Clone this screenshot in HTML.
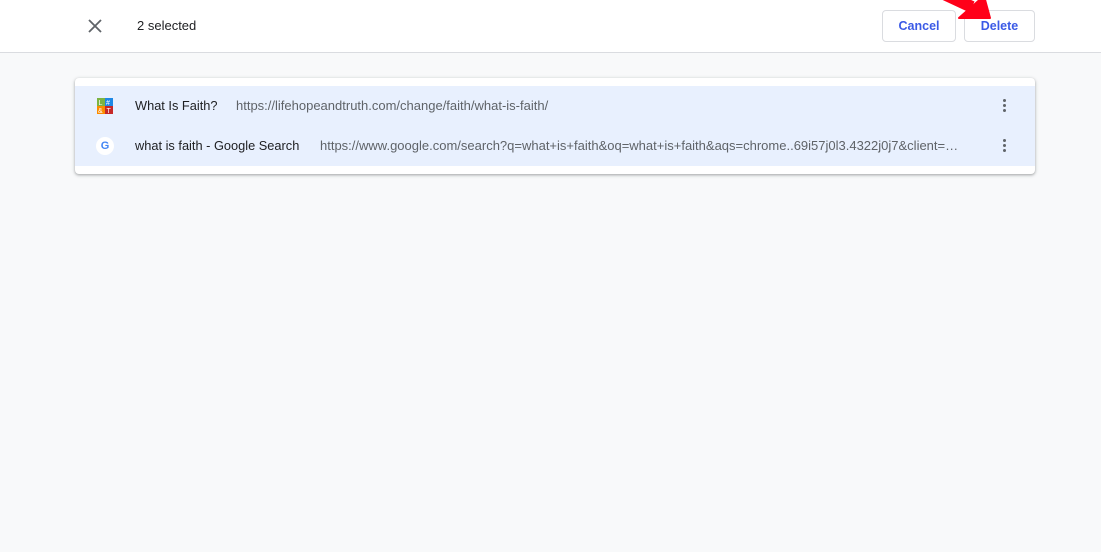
<!DOCTYPE html>
<html><head><meta charset="utf-8"><style>
*{margin:0;padding:0;box-sizing:border-box}
body{width:1101px;height:552px;background:#f8f9fa;font-family:"Liberation Sans",Roboto,sans-serif;position:relative;overflow:hidden}
.top{position:absolute;left:0;top:0;width:1101px;height:53px;background:#fff;border-bottom:1px solid #dadce0}
.x{position:absolute;left:88px;top:19px}
.sel{position:absolute;left:137px;top:18px;font-size:13px;color:#202124}
.btn{position:absolute;top:10px;height:32px;border:1px solid #dadce0;border-radius:4px;background:#fff;color:#3b5ae6;font-size:12.5px;font-weight:bold;text-align:center;line-height:30px}
.card{position:absolute;left:75px;top:78px;width:960px;height:96px;background:#fff;border-radius:4px;box-shadow:0 1px 2px rgba(60,64,67,.3),0 1px 3px 1px rgba(60,64,67,.15)}
.row{position:absolute;left:0;width:960px;height:40px;background:#e8f0fe}
.t{position:absolute;top:12px;font-size:12.8px;color:#202124;white-space:nowrap}
.u{position:absolute;top:12px;font-size:13px;color:#5f6368;white-space:nowrap}
.dots{position:absolute;left:928px;top:13px;width:3px}
.dots i{display:block;width:3px;height:3px;border-radius:50%;background:#5f6368;margin-bottom:2px}
</style></head><body>
<div class="top">
<svg class="x" width="14" height="14" viewBox="0 0 14 14"><path d="M1 1L13 13M13 1L1 13" stroke="#5f6368" stroke-width="1.8"/></svg>
<div class="sel">2 selected</div>
<div class="btn" style="left:882px;width:74px">Cancel</div>
<div class="btn" style="left:964px;width:71px">Delete</div>
</div>
<svg style="position:absolute;left:0;top:0" width="1101" height="30"><path d="M944 -6L972 7" stroke="#ff0019" stroke-width="12"/><polygon points="959,18 990,18 984,-4" fill="#ff0019" stroke="#ff0019" stroke-width="2" stroke-linejoin="round"/></svg>
<div class="card">
<div class="row" style="top:8px">
 <svg style="position:absolute;left:22px;top:12px" width="16" height="16"><rect x="0" y="0" width="8" height="8" fill="#7cb342"/><rect x="8" y="0" width="8" height="8" fill="#1e88e5"/><rect x="0" y="8" width="8" height="8" fill="#fb8c00"/><rect x="8" y="8" width="8" height="8" fill="#c62828"/><text x="1.5" y="7" font-size="7" fill="#fff" font-family="Liberation Sans">L</text><text x="9" y="7" font-size="7" fill="#fff">#</text><text x="1" y="15" font-size="7" fill="#fff">&amp;</text><text x="9.5" y="15" font-size="7" fill="#fff">T</text></svg>
 <div class="t" style="left:60px">What Is Faith?</div>
 <div class="u" style="left:161px">https://lifehopeandtruth.com/change/faith/what-is-faith/</div>
 <div class="dots"><i></i><i></i><i></i></div>
</div>
<div class="row" style="top:48px">
 <div style="position:absolute;left:21px;top:11px;width:18px;height:18px;border-radius:50%;background:#fff;font-size:11px;font-weight:bold;text-align:center;line-height:18px;color:#4285f4">G</div>
 <div class="t" style="left:60px">what is faith - Google Search</div>
 <div class="u" style="left:245px">https://www.google.com/search?q=what+is+faith&amp;oq=what+is+faith&amp;aqs=chrome..69i57j0l3.4322j0j7&amp;client=…</div>
 <div class="dots"><i></i><i></i><i></i></div>
</div>
</div>
</body></html>
